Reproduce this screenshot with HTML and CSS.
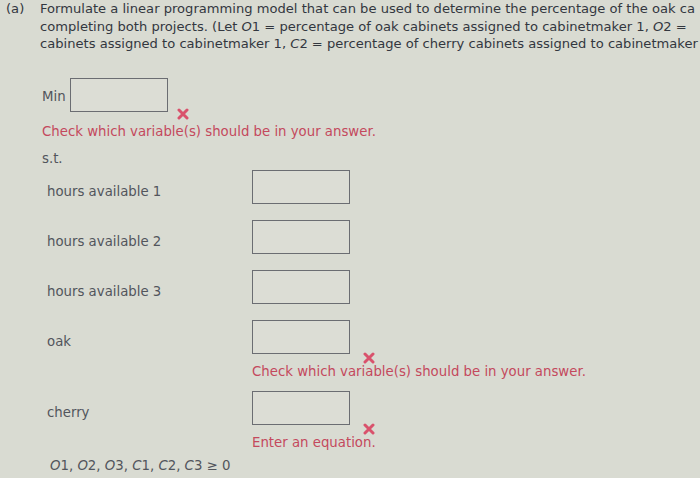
FILE: index.html
```html
<!DOCTYPE html>
<html lang="en">
<head>
    <meta charset="UTF-8">
    <meta name="viewport" content="width=device-width, initial-scale=1.0">
    <title>Linear Programming Model</title>
    <link rel="stylesheet" href="styles.css">
</head>
<body>
    <div class="part">
        <div class="part-label">(a)</div>
        <p class="part-text">
            Formulate a linear programming model that can be used to determine the percentage of the oak ca<br>
            completing both projects. (Let <i>O</i>1 = percentage of oak cabinets assigned to cabinetmaker 1, <i>O</i>2 =<br>
            cabinets assigned to cabinetmaker 1, <i>C</i>2 = percentage of cherry cabinets assigned to cabinetmaker
        </p>
    </div>

    <div class="model">
        <div class="objective">
            <span class="obj-label">Min</span>
            <input type="text" class="answer obj-answer">
            <span class="wrong">
                <svg viewBox="0 0 12 12" width="12" height="12"><path d="M2 2 L10 10 M10 2 L2 10"></path></svg>
            </span>
        </div>
        <div class="feedback">Check which variable(s) should be in your answer.</div>

        <div class="st">s.t.</div>

        <div class="constraints">
            <div class="row">
                <span class="row-label">hours available 1</span>
                <div class="field"><input type="text" class="answer"></div>
            </div>
            <div class="row">
                <span class="row-label">hours available 2</span>
                <div class="field"><input type="text" class="answer"></div>
            </div>
            <div class="row">
                <span class="row-label">hours available 3</span>
                <div class="field"><input type="text" class="answer"></div>
            </div>
            <div class="row row-tight">
                <span class="row-label">oak</span>
                <div class="field">
                    <div class="field-line">
                        <input type="text" class="answer">
                        <span class="wrong">
                            <svg viewBox="0 0 12 12" width="12" height="12"><path d="M2 2 L10 10 M10 2 L2 10"></path></svg>
                        </span>
                    </div>
                    <div class="feedback">Check which variable(s) should be in your answer.</div>
                </div>
            </div>
            <div class="row">
                <span class="row-label">cherry</span>
                <div class="field">
                    <div class="field-line">
                        <input type="text" class="answer">
                        <span class="wrong">
                            <svg viewBox="0 0 12 12" width="12" height="12"><path d="M2 2 L10 10 M10 2 L2 10"></path></svg>
                        </span>
                    </div>
                    <div class="feedback">Enter an equation.</div>
                </div>
            </div>
        </div>

        <div class="nonneg"><i>O</i>1, <i>O</i>2, <i>O</i>3, <i>C</i>1, <i>C</i>2, <i>C</i>3 &ge; 0</div>
    </div>
</body>
</html>
```

FILE: styles.css
```css
body {
    margin: 0;
    padding: 0 0 0 6px;
    background-color: #d9dbd2;
    font-family: "DejaVu Sans", Verdana, sans-serif;
    font-size: 13.3px;
    color: #33373f;
    overflow: hidden;
}
.part {
    display: flex;
    white-space: nowrap;
    font-size: 13.1px;
}
.part-label {
    width: 34px;
    flex-shrink: 0;
    line-height: 17.5px;
}
.part-text {
    margin: 0;
    line-height: 17.5px;
}
.model {
    padding-left: 36px;
    margin-top: 25px;
    color: #52555c;
}
.objective {
    display: flex;
    align-items: center;
}
.obj-label {
    width: 28px;
    padding-top: 3px;
}
.answer {
    width: 98px;
    height: 34px;
    box-sizing: border-box;
    border: 1.5px solid #6b6d72;
    background-color: #dcddd5;
    padding: 0 6px;
    margin: 0;
    font: inherit;
}
.wrong {
    align-self: flex-end;
    margin: 0 0 -8px 9px;
    width: 12px;
    height: 12px;
}
.wrong svg {
    display: block;
    stroke: #d9526c;
    stroke-width: 3;
    stroke-linecap: round;
}
.feedback {
    color: #c4495d;
    margin-top: 12px;
}
.st {
    margin-top: 12px;
}
.constraints {
    margin-top: 4px;
    padding-left: 5px;
}
.row {
    display: flex;
    align-items: flex-start;
    margin-bottom: 16px;
}
.row-tight {
    margin-bottom: 12px;
}
.row-label {
    width: 205px;
    flex-shrink: 0;
    padding-top: 14px;
}
.field-line {
    display: flex;
}
.field-line .wrong {
    margin-left: 13px;
    margin-bottom: -10px;
}
.field .feedback {
    margin-top: 10px;
}
.nonneg {
    margin-top: -8px;
    padding-left: 8px;
}
```
